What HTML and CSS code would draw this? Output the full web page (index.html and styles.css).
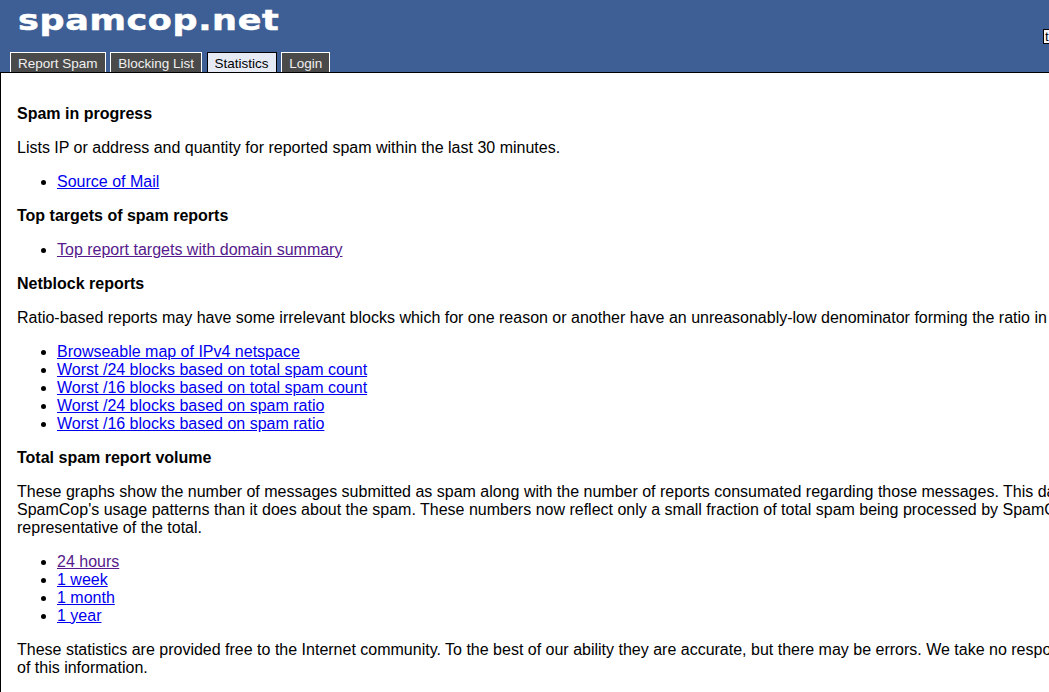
FILE: index.html
```html
<!DOCTYPE html>
<html lang="en">
<head>
<meta charset="utf-8">
<title>SpamCop Statistics</title>
<link rel="stylesheet" href="styles.css">
</head>
<body>
<header class="masthead">
  <div class="brand-row">
    <a class="logo" href="#">spamcop.net</a>
    <div class="search-box">te</div>
  </div>
  <nav class="tabs">
    <a class="tab" href="#">Report Spam</a>
    <a class="tab" href="#">Blocking List</a>
    <a class="tab tab-active" href="#">Statistics</a>
    <a class="tab" href="#">Login</a>
  </nav>
</header>
<main class="content">
  <p><strong>Spam in progress</strong></p>
  <p>Lists IP or address and quantity for reported spam within the last 30 minutes.</p>
  <ul>
    <li><a href="#">Source of Mail</a></li>
  </ul>
  <p><strong>Top targets of spam reports</strong></p>
  <ul>
    <li><a class="visited" href="#">Top report targets with domain summary</a></li>
  </ul>
  <p><strong>Netblock reports</strong></p>
  <p>Ratio-based reports may have some irrelevant blocks which for one reason or another have an unreasonably-low denominator forming the ratio in these reports.</p>
  <ul>
    <li><a href="#">Browseable map of IPv4 netspace</a></li>
    <li><a href="#">Worst /24 blocks based on total spam count</a></li>
    <li><a href="#">Worst /16 blocks based on total spam count</a></li>
    <li><a href="#">Worst /24 blocks based on spam ratio</a></li>
    <li><a href="#">Worst /16 blocks based on spam ratio</a></li>
  </ul>
  <p><strong>Total spam report volume</strong></p>
  <p>These graphs show the number of messages submitted as spam along with the number of reports consumated regarding those messages. This data says more about SpamCop's usage patterns than it does about the spam. These numbers now reflect only a small fraction of total spam being processed by SpamCop, and are not representative of the total.</p>
  <ul>
    <li><a class="visited" href="#">24 hours</a></li>
    <li><a href="#">1 week</a></li>
    <li><a href="#">1 month</a></li>
    <li><a href="#">1 year</a></li>
  </ul>
  <p>These statistics are provided free to the Internet community. To the best of our ability they are accurate, but there may be errors. We take no responsibility for the use of this information.</p>
</main>
</body>
</html>
```
FILE: styles.css
```css
html, body {
  margin: 0;
  padding: 0;
  height: 100%;
  overflow: hidden;
  background: #fff;
  font-family: "Liberation Sans", Arial, sans-serif;
  font-size: 16px;
  line-height: 18px;
  color: #000;
}
.masthead {
  width: 1240px;
  height: 72px;
  background: #3e5f96;
  display: flex;
  flex-direction: column;
}
.brand-row {
  height: 52px;
  width: 1049px;
  position: relative;
}
.logo {
  display: block;
  width: max-content;
  margin: 3px 0 0 18px;
  color: #fff;
  text-decoration: none;
  font-family: "DejaVu Sans", sans-serif;
  font-weight: 700;
  font-size: 28px;
  line-height: 36px;
  letter-spacing: 0.5px;
  -webkit-text-stroke: 0.5px #fff;
  transform: scaleX(1.25);
  transform-origin: left center;
}
.search-box {
  position: absolute;
  left: 1043px;
  top: 29px;
  width: 14px;
  height: 13px;
  border: 1px solid #000;
  background: #f4f6fb;
  font-family: "Liberation Sans", sans-serif;
  font-size: 13.3px;
  line-height: 13px;
  overflow: hidden;
  padding-left: 1px;
}
.tabs {
  display: flex;
  gap: 4.6px;
  padding-left: 10px;
  align-items: flex-end;
  height: 20px;
}
.tab {
  display: block;
  height: 20px;
  box-sizing: border-box;
  padding: 2px 7px 0;
  background: #4a4a4a;
  border: 1px solid #fff;
  border-bottom: 0;
  color: #f0f0f0;
  text-decoration: none;
  font-size: 13.5px;
  line-height: 17px;
}
.tab-active {
  background: #e6eaf4;
  border-color: #000;
  color: #000;
}
.content {
  width: 1180px;
  border-top: 1px solid #000;
  border-left: 1px solid #000;
  padding: 16px 16px 0;
  min-height: 620px;
}
p {
  margin: 16px 0;
}
ul {
  margin: 16px 0;
  padding-left: 40px;
}
a {
  color: #0000ee;
}
a.visited {
  color: #551a8b;
}
```
